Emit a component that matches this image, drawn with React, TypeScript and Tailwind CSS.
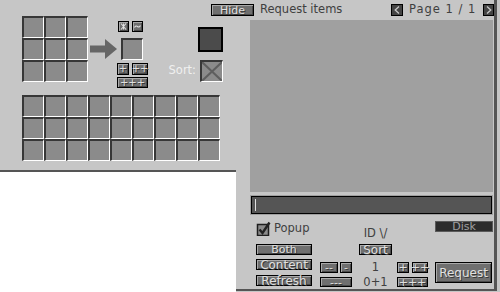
import React from "react";

function Slot() {
  return (
    <div className="w-[22px] h-[22px] bg-[#8b8b8b] border-t-2 border-l-2 border-r border-b border-t-[#373737] border-l-[#373737] border-r-white border-b-white" />
  );
}

function Btn({ className = "", children }: { className?: string; children?: React.ReactNode }) {
  return (
    <div
      className={`flex items-center justify-center bg-[#6f6f6f] border border-black shadow-[inset_1px_1px_0_#a9a9a9,inset_-1px_-1px_0_#4a4a4a] text-[#e0e0e0] [text-shadow:1px_1px_0_#383838] leading-none whitespace-nowrap ${className}`}
    >
      {children}
    </div>
  );
}

function Grid({ cols, rows }: { cols: number; rows: number }) {
  return (
    <div className="flex flex-col">
      {Array.from({ length: rows }).map((_, r) => (
        <div key={r} className="flex">
          {Array.from({ length: cols }).map((_, c) => (
            <Slot key={c} />
          ))}
        </div>
      ))}
    </div>
  );
}

export default function App() {
  return (
    <div className="w-[500px] h-[292px] bg-white flex overflow-hidden font-['DejaVu_Sans',sans-serif] text-[11px]">
      {/* Left panel */}
      <div className="w-[236px] h-[172px] bg-[#c6c6c6] border-b-2 border-b-[#555555] flex flex-col pl-[22px] pt-[16px] shrink-0">
        <div className="flex h-[72px]">
          <Grid cols={3} rows={3} />
          <svg width="28" height="20" viewBox="0 0 28 20" className="ml-[2px] mt-[23px]">
            <rect x="0" y="6.5" width="16" height="7" fill="#666666" />
            <polygon points="15,0 27,10 15,20" fill="#666666" />
          </svg>
          <div className="flex flex-col w-[31px] ml-[-1px]">
            <div className="flex mt-[5px] gap-[3px] ml-[1px]">
              <Btn className="w-[11px] h-[11px]">
                <svg width="7" height="7" viewBox="0 0 7 7">
                  <path d="M1 0.5 L3.5 3.5 L6 0.5 M1 6.5 L3.5 3.5 L6 6.5 M3.5 0.5 V6.5" stroke="#e0e0e0" strokeWidth="1.1" fill="none" />
                </svg>
              </Btn>
              <Btn className="w-[11px] h-[11px]">
                <svg width="7" height="7" viewBox="0 0 7 7">
                  <path d="M0.5 4.5 Q2 2 3.5 3.5 T6.5 2.5" stroke="#e0e0e0" strokeWidth="1.1" fill="none" />
                </svg>
              </Btn>
            </div>
            <div className="mt-[6px] ml-[4px]">
              <Slot />
            </div>
            <div className="flex mt-[3px] gap-[3px]">
              <Btn className="w-[12px] h-[12px] text-[10px]">+</Btn>
              <Btn className="w-[16px] h-[12px] text-[10px]">++</Btn>
            </div>
            <Btn className="w-[31px] h-[11px] mt-[2px] text-[10px]">+++</Btn>
          </div>
          <div className="flex flex-col items-end w-[60px] ml-[15px]">
            <div className="mt-[11px] w-[25px] h-[25px] bg-[#4b4b4b] border-2 border-black" />
            <div className="flex items-center mt-[8px]">
              <span className="text-[#f0f0f0] text-[11.5px] mr-[4px]">Sort:</span>
              <div className="w-[23px] h-[22px] bg-[#8b8b8b] border-t-2 border-l-2 border-r border-b border-t-[#373737] border-l-[#373737] border-r-white border-b-white">
                <svg width="20" height="19" viewBox="0 0 20 19">
                  <path d="M0 0 L20 19 M20 0 L0 19" stroke="#5e5e5e" strokeWidth="2" />
                </svg>
              </div>
            </div>
          </div>
        </div>
        <div className="mt-[7px]">
          <Grid cols={9} rows={3} />
        </div>
      </div>

      {/* Right panel */}
      <div className="w-[264px] h-[292px] bg-[#c6c6c6] shrink-0">
        <div className="w-[261px] h-[291px] border-r-[3px] border-b-2 border-[#555555] flex flex-col">
          <div className="flex items-center h-[12px] mt-[4px]">
            <Btn className="w-[43px] h-[12px] ml-[-25px] text-[11px]">Hide</Btn>
            <span className="ml-[6px] text-[#404040] text-[11.5px]">Request items</span>
            <div className="ml-auto flex items-center">
              <div className="w-[12px] h-[12px] bg-[#444444] border border-black flex items-center justify-center">
                <svg width="6" height="8" viewBox="0 0 6 8">
                  <path d="M5 0.5 L1.2 4 L5 7.5" stroke="#c8c8c8" strokeWidth="1.3" fill="none" />
                </svg>
              </div>
              <span className="ml-[6px] w-[68px] text-[#404040] text-[11.5px] tracking-[1px]">Page 1 / 1</span>
              <div className="ml-[6px] w-[11px] h-[12px] bg-[#444444] border border-black flex items-center justify-center">
                <svg width="6" height="8" viewBox="0 0 6 8">
                  <path d="M1 0.5 L4.8 4 L1 7.5" stroke="#c8c8c8" strokeWidth="1.3" fill="none" />
                </svg>
              </div>
            </div>
          </div>
          <div className="mt-[4px] ml-[14px] w-[243px] h-[172px] bg-[#a0a0a0]" />
          <div className="mt-[3px] ml-[14px] w-[243px] h-[20px] border border-[#a0a0a0] bg-black p-[1px]">
            <div className="w-full h-full bg-[#555555] flex items-center pl-[3px]">
              <div className="w-[1px] h-[12px] bg-[#e0e0e0]" />
            </div>
          </div>
          <div className="flex mt-[6px] pl-[20px]">
            {/* Col A */}
            <div className="flex flex-col w-[56px]">
              <div className="flex items-center h-[15px]">
                <svg width="15" height="15" viewBox="0 0 15 15">
                  <rect x="1.5" y="3.5" width="11" height="11" fill="#8b8b8b" stroke="#1e1e1e" strokeWidth="1.5" />
                  <path d="M3.5 8.5 L6.5 12 L13.5 1.5" stroke="#222222" strokeWidth="2.4" fill="none" />
                </svg>
                <span className="ml-[3px] text-[#404040] text-[11.5px]">Popup</span>
              </div>
              <Btn className="w-[56px] h-[11px] mt-[8px]">Both</Btn>
              <Btn className="w-[56px] h-[11px] mt-[4px] text-[12px]">Content</Btn>
              <Btn className="w-[56px] h-[11px] mt-[5px] text-[12px]">Refresh</Btn>
            </div>
            {/* Col B */}
            <div className="flex flex-col w-[32px] ml-[8px]">
              <div className="flex mt-[41px] gap-[2px]">
                <Btn className="w-[18px] h-[11px]">--</Btn>
                <Btn className="w-[12px] h-[11px]">-</Btn>
              </div>
              <Btn className="w-[32px] h-[10px] mt-[4px]">---</Btn>
            </div>
            {/* Col C */}
            <div className="flex flex-col items-center w-[33px] ml-[7px] text-[#404040] text-[11.5px]">
              <div className="h-[12px] mt-[6px] leading-[12px]">ID \/</div>
              <Btn className="w-[33px] h-[11px] mt-[5px] text-[12px]">Sort</Btn>
              <div className="h-[12px] mt-[6px] leading-[12px]">1</div>
              <div className="h-[12px] mt-[3px] leading-[12px]">0+1</div>
            </div>
            {/* Col D */}
            <div className="flex flex-col w-[31px] ml-[5px]">
              <div className="flex mt-[41px] gap-[3px]">
                <Btn className="w-[12px] h-[11px]">+</Btn>
                <Btn className="w-[16px] h-[11px]">++</Btn>
              </div>
              <Btn className="w-[31px] h-[10px] mt-[4px]">+++</Btn>
            </div>
            {/* Col E */}
            <div className="flex flex-col w-[58px] ml-[7px]">
              <div className="w-[58px] h-[11px] bg-[#2c2c2c] border border-[#5a5a5a] flex items-center justify-center text-[#a0a0a0] leading-none">Disk</div>
              <Btn className="w-[57px] h-[21px] mt-[30px] text-[12px]">Request</Btn>
            </div>
          </div>
        </div>
      </div>
    </div>
  );
}
